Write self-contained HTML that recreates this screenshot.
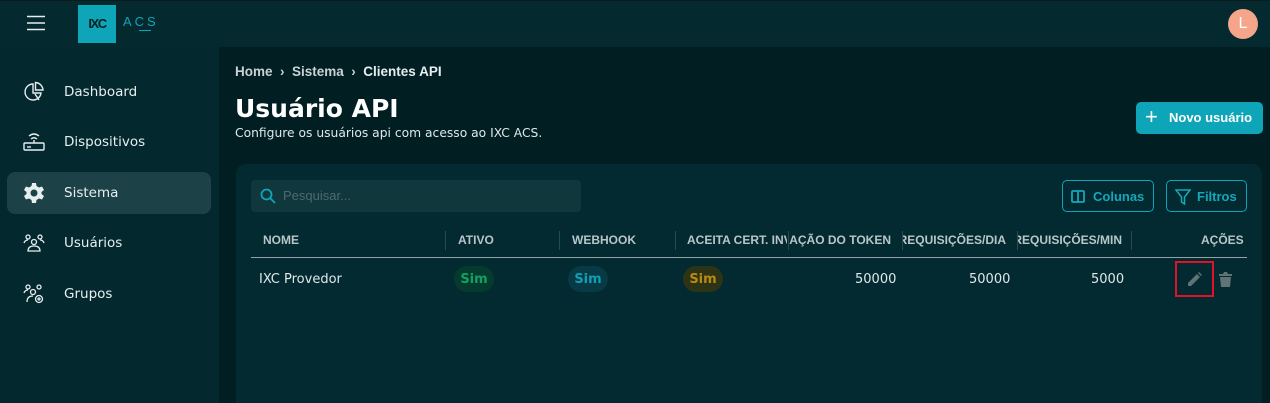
<!DOCTYPE html>
<html><head><meta charset="utf-8"><style>
*{box-sizing:border-box;margin:0;padding:0}
html,body{width:1270px;height:403px;overflow:hidden}
body{background:#011e22;font-family:"Liberation Sans","DejaVu Sans",sans-serif;color:#e6eef0;position:relative}
.top{position:absolute;left:0;top:0;width:1270px;height:47px;background:#042a30;border-top:1px solid #0a1a1d}
.side{position:absolute;left:0;top:47px;width:219px;height:356px;background:#03282e}
.nav{position:absolute;left:7px;width:204px;height:42px;border-radius:8px;font-family:"DejaVu Sans",sans-serif;font-size:13.5px;color:#e6eef0}
.nav span{position:absolute;left:57px;top:13px}
.nav svg{position:absolute;left:16px;top:10px}
.card{position:absolute;left:236px;top:164px;width:1026px;height:239px;background:#022a30;border-radius:10px 10px 0 0}
.th{position:absolute;top:233px;font-size:12px;font-weight:bold;color:#b9c6c8;white-space:nowrap}
.sep{position:absolute;top:231px;width:1px;height:19px;background:#2a4a4f}
.td{position:absolute;top:272px;font-family:"DejaVu Sans",sans-serif;font-size:13px;color:#dfe8ea}
.pill{position:absolute;top:266px;height:26px;width:40px;border-radius:13px;font-family:"DejaVu Sans",sans-serif;font-weight:bold;font-size:13px;text-align:center;line-height:27px}
.btn{position:absolute;top:180px;height:32px;border:1px solid #0ea5b8;border-radius:5px;color:#15a7bb;font-weight:bold;font-size:13px}
</style></head><body>
<div class="top">
 <svg style="position:absolute;left:27px;top:14px" width="18" height="16"><path d="M0 1.5H18M0 8H18M0 14.5H18" stroke="#e6eef0" stroke-width="1.6"/></svg>
 <div style="position:absolute;left:78px;top:4px;width:38px;height:38px;background:#0ea5b8;font-weight:bold;font-size:13px;color:#022;text-align:center;line-height:38px;letter-spacing:-1.5px">IXC</div>
 <div style="position:absolute;left:123px;top:13px;font-size:13px;color:#0ea5b8;letter-spacing:3px">ACS</div>
 <div style="position:absolute;left:139px;top:29px;width:12px;height:1px;background:#0ea5b8"></div>
 <div style="position:absolute;left:1228px;top:8px;width:30px;height:30px;border-radius:50%;background:#f4a58a;color:#fff;font-size:16px;text-align:center;line-height:30px">L</div>
</div>
<div class="side">
 <div class="nav" style="top:24px"><svg width="22" height="22" fill="none" stroke="#e6eef0" stroke-width="1.4"><path d="M10 3A8 8 0 1 0 18 12H10Z"/><path d="M12.5 1.5A8 8 0 0 1 20 9H12.5Z"/><path d="M12 13L16 19"/></svg><span>Dashboard</span></div>
 <div class="nav" style="top:74px"><svg width="22" height="22" fill="none" stroke="#e6eef0" stroke-width="1.4"><path d="M6 5Q11 1 16 5M8 8Q11 5.5 14 8"/><path d="M11 9V12"/><rect x="1" y="12" width="20" height="7" rx="1"/><path d="M4 16H8"/></svg><span>Dispositivos</span></div>
 <div class="nav" style="top:125px;background:#1c4147"><svg width="22" height="22"><path fill="#e6eef0" fill-rule="evenodd" d="M9 1H13L13.5 4L16 5.5L19 4.5L21 8L18.5 10V12L21 14L19 17.5L16 16.5L13.5 18L13 21H9L8.5 18L6 16.5L3 17.5L1 14L3.5 12V10L1 8L3 4.5L6 5.5L8.5 4ZM11 7.5A3.5 3.5 0 1 0 11 14.5A3.5 3.5 0 1 0 11 7.5Z"/></svg><span>Sistema</span></div>
 <div class="nav" style="top:175px"><svg width="22" height="22" fill="none" stroke="#e6eef0" stroke-width="1.3"><circle cx="5" cy="5" r="2"/><circle cx="17" cy="5" r="2"/><circle cx="11" cy="10" r="2.5"/><path d="M1 11Q2 8 5 8M21 11Q20 8 17 8M5 19Q5 14 11 14Q17 14 17 19Z"/></svg><span>Usuários</span></div>
 <div class="nav" style="top:226px"><svg width="22" height="22" fill="none" stroke="#e6eef0" stroke-width="1.3"><circle cx="5" cy="4" r="2"/><circle cx="16" cy="4" r="2"/><circle cx="10" cy="9" r="2.5"/><path d="M1 10Q2 7 5 7M4 19Q4 13 10 13"/><circle cx="16" cy="16" r="3.5"/><circle cx="16" cy="16" r="1"/></svg><span>Grupos</span></div>
</div>
<div style="position:absolute;left:235px;top:64px;font-size:13.5px;font-weight:bold;color:#c9d3d5">Home &nbsp;›&nbsp; Sistema &nbsp;›&nbsp; <span style="color:#e6eef0">Clientes API</span></div>
<div style="position:absolute;left:235px;top:94px;font-family:'DejaVu Sans',sans-serif;font-size:25px;font-weight:bold;color:#fff">Usuário API</div>
<div style="position:absolute;left:235px;top:126px;font-family:'DejaVu Sans',sans-serif;font-size:12.3px;color:#dfe8ea">Configure os usuários api com acesso ao IXC ACS.</div>
<div style="position:absolute;left:1136px;top:102px;width:127px;height:32px;background:#0ea5b8;border-radius:5px;color:#fff;font-weight:bold;font-size:13px;line-height:32px"><span style="position:absolute;left:9px;font-size:22px;font-weight:normal;top:-1px">+</span><span style="position:absolute;left:33px">Novo usuário</span></div>
<div class="card"></div>
<div style="position:absolute;left:251px;top:180px;width:330px;height:32px;background:#0f373c;border-radius:4px"><svg style="position:absolute;left:9px;top:8px" width="16" height="16" fill="none" stroke="#0ea5b8" stroke-width="1.8"><circle cx="6.5" cy="6.5" r="5"/><path d="M10 10L15 15"/></svg><span style="position:absolute;left:32px;top:8px;font-size:13px;color:#4e6a6e">Pesquisar...</span></div>
<div class="btn" style="left:1062px;width:92px"><svg style="position:absolute;left:8px;top:9px" width="14" height="13" fill="none" stroke="#15a7bb" stroke-width="1.8"><rect x="1" y="1" width="12" height="11" rx="1"/><path d="M7 1V12"/></svg><span style="position:absolute;left:30px;top:8px">Colunas</span></div>
<div class="btn" style="left:1166px;width:81px"><svg style="position:absolute;left:8px;top:8px" width="16" height="16" fill="none" stroke="#15a7bb" stroke-width="1.5"><path d="M1 1H15L9.5 8V15L6.5 13V8Z"/></svg><span style="position:absolute;left:30px;top:8px">Filtros</span></div>
<div class="th" style="left:263px">NOME</div>
<div class="sep" style="left:445px"></div><div class="th" style="left:458px">ATIVO</div>
<div class="sep" style="left:559px"></div><div class="th" style="left:572px">WEBHOOK</div>
<div class="sep" style="left:675px"></div>
<div style="position:absolute;left:687px;top:233px;width:100px;overflow:hidden" class="th">ACEITA CERT. INVÁLIDO</div>
<div class="sep" style="left:788px"></div>
<div style="position:absolute;left:789px;top:233px;width:102px;overflow:hidden;direction:rtl" class="th">EXPIRAÇÃO DO TOKEN</div>
<div class="sep" style="left:902px"></div>
<div style="position:absolute;left:903px;top:233px;width:103px;overflow:hidden;direction:rtl" class="th">&#x202A;REQUISIÇÕES/DIA&#x202C;</div>
<div class="sep" style="left:1017px"></div>
<div style="position:absolute;left:1018px;top:233px;width:104px;overflow:hidden;direction:rtl" class="th">&#x202A;REQUISIÇÕES/MIN&#x202C;</div>
<div class="sep" style="left:1131px"></div>
<div class="th" style="left:1201px">AÇÕES</div>
<div style="position:absolute;left:251px;top:257px;width:996px;height:1px;background:#8fa3a6"></div>
<div class="td" style="left:259px">IXC Provedor</div>
<div class="pill" style="left:454px;background:#053b2e;color:#12a160">Sim</div>
<div class="pill" style="left:568px;background:#073a44;color:#109fb5">Sim</div>
<div class="pill" style="left:683px;background:#2d3416;color:#b98a12">Sim</div>
<div class="td" style="left:855px">50000</div>
<div class="td" style="left:969px">50000</div>
<div class="td" style="left:1091px">5000</div>
<div style="position:absolute;left:1175px;top:261px;width:39px;height:36px;border:2px solid #e0122a"></div>
<svg style="position:absolute;left:1188px;top:272px" width="14" height="14"><path fill="#5e7477" d="M0 14V11L9 2L12 5L3 14ZM10 1L11 0L14 3L13 4Z"/></svg>
<svg style="position:absolute;left:1219px;top:272px" width="13" height="15"><path fill="#5e7477" d="M0 2H4L5 0H8L9 2H13V4H0ZM1 5H12L11 15H2Z"/></svg>
</body></html>
